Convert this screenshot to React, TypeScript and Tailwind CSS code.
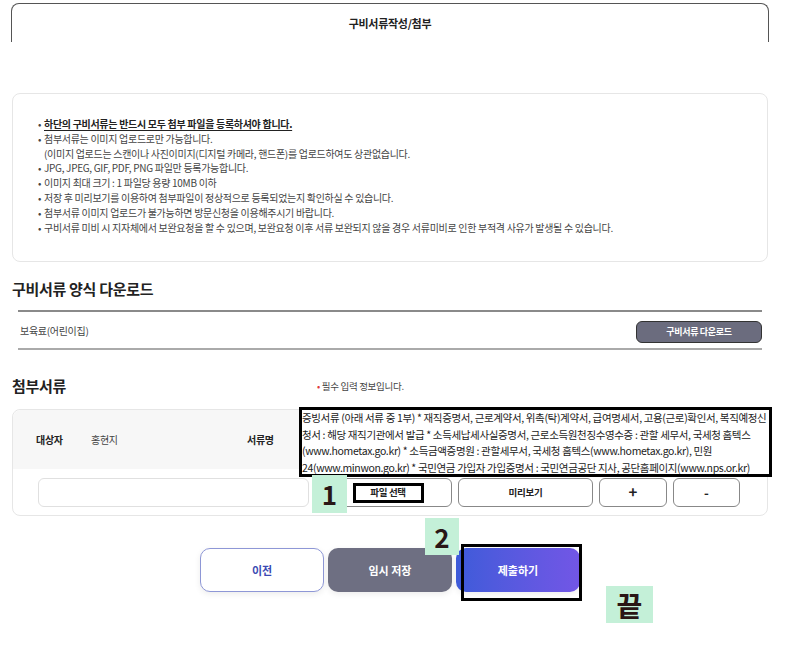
import React from "react";

const notices: { text: string; sub?: string; strong?: boolean }[] = [
  { text: "하단의 구비서류는 반드시 모두 첨부 파일을 등록하셔야 합니다.", strong: true },
  {
    text: "첨부서류는 이미지 업로드로만 가능합니다.",
    sub: "(이미지 업로드는 스캔이나 사진이미지(디지털 카메라, 핸드폰)를 업로드하여도 상관없습니다.",
  },
  { text: "JPG, JPEG, GIF, PDF, PNG 파일만 등록가능합니다." },
  { text: "이미지 최대 크기 : 1 파일당 용량 10MB 이하" },
  { text: "저장 후 미리보기를 이용하여 첨부파일이 정상적으로 등록되었는지 확인하실 수 있습니다." },
  { text: "첨부서류 이미지 업로드가 불가능하면 방문신청을 이용해주시기 바랍니다." },
  {
    text: "구비서류 미비 시 지자체에서 보완요청을 할 수 있으며, 보완요청 이후 서류 보완되지 않을 경우 서류미비로 인한 부적격 사유가 발생될 수 있습니다.",
  },
];

const descLines = [
  "증빙서류 (아래 서류 중 1부) * 재직증명서, 근로계약서, 위촉(탁)계약서, 급여명세서, 고용(근로)확인서, 복직예정신",
  "청서 : 해당 재직기관에서 발급 * 소득세납세사실증명서, 근로소득원천징수영수증 : 관할 세무서, 국세청 홈텍스",
  "(www.hometax.go.kr) * 소득금액증명원 : 관할세무서, 국세청 홈텍스(www.hometax.go.kr), 민원",
  "24(www.minwon.go.kr) * 국민연금 가입자 가입증명서 : 국민연금공단 지사, 공단홈페이지(www.nps.or.kr)",
];

export default function App() {
  return (
    <div
      className="relative w-[800px] h-[654px] bg-white overflow-hidden text-[#333]"
      style={{ fontFamily: '"Noto Sans CJK KR", "Noto Sans", sans-serif' }}
    >
      {/* Tab */}
      <div className="ml-[11px] w-[758px] mt-[3px] h-[39px] border border-b-0 border-[#555] rounded-t-[8px] flex justify-center items-center">
        <span className="text-[11px] font-bold text-[#222] tracking-[-0.3px]">구비서류작성/첨부</span>
      </div>

      <div className="ml-3 w-[756px]">
        {/* Notice box */}
        <div className="mt-[51px] h-[169px] border border-[#e6e6e6] rounded-[8px] pt-[23px] pl-[25px]">
          <ul className="text-[10px] leading-[14.8px] tracking-[-0.3px] text-[#444]">
            {notices.map((n, i) => (
              <li key={i} className="flex">
                <span className="w-[6px] shrink-0">•</span>
                <div>
                  <div className={n.strong ? "font-bold text-[#222] underline underline-offset-2" : ""}>{n.text}</div>
                  {n.sub && <div>{n.sub}</div>}
                </div>
              </li>
            ))}
          </ul>
        </div>

        {/* Download section */}
        <h2 className="mt-[17px] text-[15px] leading-[20px] font-semibold text-[#222] tracking-[-0.3px]">
          구비서류 양식 다운로드
        </h2>
        <div className="mt-[11px] mx-[6px] border-t-2 border-b-2 border-t-[#8a8a8a] border-b-[#aaaaaa] h-[40px] flex items-center justify-between pl-[2px]">
          <span className="text-[10px] text-[#444] tracking-[-0.3px]">보육료(어린이집)</span>
          <button className="w-[126px] h-[22px] rounded-[6px] bg-[#6b6c7e] border border-[#333] text-white text-[9px] font-bold tracking-[-0.3px] mt-[3px]">
            구비서류 다운로드
          </button>
        </div>

        {/* Attachments heading */}
        <div className="mt-[26px] flex items-center">
          <h2 className="w-[305px] text-[15px] leading-[20px] font-semibold text-[#222] tracking-[-0.3px]">첨부서류</h2>
          <span className="text-[9.5px] text-[#444] tracking-[-0.3px]">
            <span className="text-[#e03a3a]">•</span> 필수 입력 정보입니다.
          </span>
        </div>

        {/* Table */}
        <div className="mt-[13px] h-[107px] border border-[#e6e6e6] rounded-[8px] flex flex-col">
          <div className="h-[59px] bg-[#f7f7f7] rounded-t-[8px] flex items-center text-[10px] tracking-[-0.3px]">
            <span className="ml-[23px] w-[55px] font-bold text-[#222]">대상자</span>
            <span className="w-[156px] text-[#444]">홍현지</span>
            <span className="w-[52px] font-bold text-[#222]">서류명</span>
            <div className="relative flex-1 self-stretch">
              <div className="absolute left-0 top-[-3px] w-[473px] h-[70px] border-[3px] border-black bg-white overflow-hidden">
                {descLines.map((l, i) => (
                  <div key={i} className="whitespace-nowrap text-[10.5px] leading-[16.5px] tracking-[-0.35px] text-[#222]">
                    {l}
                  </div>
                ))}
              </div>
            </div>
          </div>
          <div className="flex items-start pt-[9px] pl-[25px] gap-[6px]">
            <div className="w-[271px] h-[29px] border border-[#e0e0e0] rounded-[6px] bg-white" />
            <button className="w-[137px] h-[29px] border border-[#888] rounded-[6px] bg-white flex items-center justify-center text-[9.5px] font-bold text-[#222]">
              <span className="ml-[9px] w-[71px] h-[20px] border-[3px] border-black flex items-center justify-center tracking-[-0.3px]">
                파일 선택
              </span>
            </button>
            <button className="w-[135px] h-[29px] border border-[#888] rounded-[6px] bg-white text-[9.5px] font-bold text-[#222] tracking-[-0.3px]">
              미리보기
            </button>
            <button className="w-[68px] h-[29px] border border-[#888] rounded-[6px] bg-white text-[15px] font-bold text-[#222]">
              +
            </button>
            <button className="w-[67px] h-[29px] border border-[#888] rounded-[6px] bg-white text-[13px] font-bold text-[#222]">
              -
            </button>
          </div>
        </div>

        {/* Bottom buttons */}
        <div className="mt-[32px] flex justify-center gap-[4px]">
          <button className="w-[124px] h-[44px] rounded-[10px] border border-[#8e97d6] bg-white text-[11px] font-bold text-[#3b4ab3] shadow-[0_2px_6px_rgba(0,0,0,0.08)]">
            이전
          </button>
          <button className="w-[124px] h-[44px] rounded-[10px] bg-[#6e6f82] text-[11px] font-bold text-white shadow-[0_2px_6px_rgba(0,0,0,0.08)]">
            임시 저장
          </button>
          <button className="w-[124px] h-[44px] rounded-[10px] bg-gradient-to-r from-[#3d5bd9] to-[#7256e6] text-[11px] font-bold text-white shadow-[0_2px_6px_rgba(0,0,0,0.08)]">
            제출하기
          </button>
        </div>
      </div>

      {/* Annotations */}
      <div className="absolute left-[312px] top-[475px] w-[35px] h-[38px] bg-[#c4f0d8] flex items-center justify-center text-[26px] font-bold text-[#2a1616] leading-none">
        1
      </div>
      <div className="absolute left-[425px] top-[518px] w-[34px] h-[37px] bg-[#c4f0d8] flex items-center justify-center text-[26px] font-bold text-[#2a1616] leading-none">
        2
      </div>
      <div className="absolute left-[461px] top-[544px] w-[121px] h-[57px] border-[3px] border-black" />
      <div className="absolute left-[606px] top-[586px] w-[47px] h-[37px] bg-[#c4f0d8] flex items-center justify-center text-[28px] font-bold text-[#2a1616] leading-none">
        끝
      </div>
    </div>
  );
}
